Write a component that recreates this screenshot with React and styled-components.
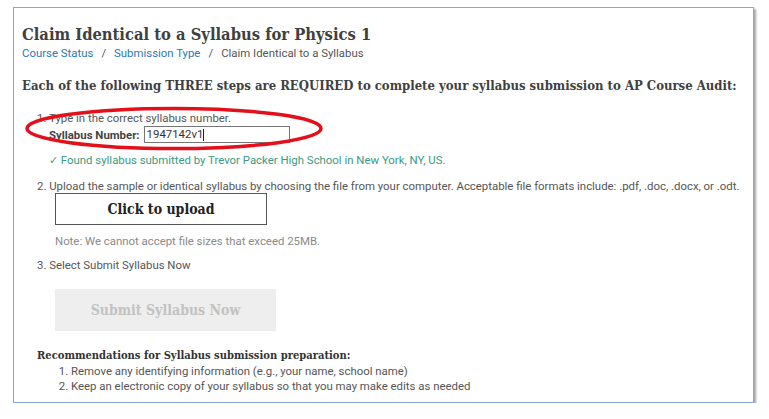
import React from 'react'
import styled, { createGlobalStyle } from 'styled-components'

const Global = createGlobalStyle`
  body {
    margin: 0;
    background: #fff;
    font-family: Roboto, "Liberation Sans", Arial, sans-serif;
  }
`

const Panel = styled.div`
  position: relative;
  margin: 7px 0 0 13px;
  width: 741px;
  height: 396px;
  box-sizing: border-box;
  border: 1.5px solid #86a7d6;
  box-shadow: 2px 2px 2px rgba(0, 0, 0, 0.35);
  padding: 17px 0 0 8px;
  color: #555;
  font-size: 11.4px;
`

const Title = styled.h1`
  margin: 0;
  font-family: "DejaVu Serif Condensed", "DejaVu Serif", serif;
  font-weight: bold;
  font-size: 16.4px;
  line-height: 20px;
  color: #404040;
`

const Crumbs = styled.div`
  display: flex;
  gap: 8px;
  margin-top: 1px;
  line-height: 14px;
  color: #555;
`

const Crumb = styled.a`
  color: ${p => (p.current ? '#555' : '#2b78b6')};
  text-decoration: none;
`

const Heading = styled.h2`
  margin: 17px 0 0;
  font-family: "DejaVu Serif Condensed", "DejaVu Serif", serif;
  font-weight: bold;
  font-size: 13px;
  line-height: 18px;
  color: #404040;
  white-space: nowrap;
`

const Step = styled.div`
  position: relative;
  padding-left: 15px;
  margin-top: ${p => p.gap || 0}px;
`

const Line = styled.div`
  line-height: 14px;
  padding-left: ${p => p.indent || 0}px;
  margin-top: ${p => p.gap || 0}px;
  color: ${p => p.color || '#555'};
`

const Field = styled.div`
  display: flex;
  align-items: center;
  gap: 4px;
  padding-left: 12px;
  margin-top: 1px;
`

const Label = styled.span`
  font-weight: bold;
  color: #444;
`

const Input = styled.div`
  width: 146px;
  height: 17px;
  box-sizing: border-box;
  border: 1px solid #777;
  padding: 0 2px;
  line-height: 15px;
  color: #333;
  display: flex;
  align-items: center;

  &::after {
    content: '';
    width: 1px;
    height: 12px;
    background: #222;
  }
`

const Button = styled.div`
  width: ${p => p.w}px;
  height: ${p => p.h}px;
  box-sizing: border-box;
  margin: ${p => p.m || '0'};
  margin-left: 18px;
  display: flex;
  align-items: center;
  justify-content: center;
  font-family: "DejaVu Serif Condensed", "DejaVu Serif", serif;
  font-weight: bold;
  font-size: 14px;
  border: ${p => (p.disabled ? 'none' : '1px solid #555')};
  background: ${p => (p.disabled ? '#eeeeee' : '#fff')};
  color: ${p => (p.disabled ? '#c2c2c2' : '#222')};
`

const Recs = styled.div`
  margin: 17px 0 0 15px;
`

const RecTitle = styled.div`
  font-family: "DejaVu Serif Condensed", "DejaVu Serif", serif;
  font-weight: bold;
  font-size: 11.1px;
  line-height: 15px;
  color: #333;
`

const List = styled.ol`
  margin: 1px 0 0;
  padding-left: 34px;
  line-height: 15px;
  color: #555;
`

const Ellipse = styled.svg`
  position: absolute;
  left: 2px;
  top: 1px;
  overflow: visible;
  pointer-events: none;
`

export default function App() {
  return (
    <>
      <Global />
      <Panel>
        <Title>Claim Identical to a Syllabus for Physics 1</Title>
        <Crumbs>
          <Crumb href="#">Course Status</Crumb>
          <span>/</span>
          <Crumb href="#">Submission Type</Crumb>
          <span>/</span>
          <Crumb current>Claim Identical to a Syllabus</Crumb>
        </Crumbs>
        <Heading>
          Each of the following THREE steps are REQUIRED to complete your syllabus submission to AP Course Audit:
        </Heading>

        <Step gap={16}>
          <Line>1. Type in the correct syllabus number.</Line>
          <Field>
            <Label>Syllabus Number:</Label>
            <Input>1947142v1</Input>
          </Field>
          <Line indent={12} gap={10} color="#3a9a82">
            ✓ Found syllabus submitted by Trevor Packer High School in New York, NY, US.
          </Line>
          <Ellipse width="300" height="40">
            <ellipse cx="150" cy="16.5" rx="147" ry="20" fill="none" stroke="#e3101c" strokeWidth="3.5" />
          </Ellipse>
        </Step>

        <Step gap={12}>
          <Line>
            2. Upload the sample or identical syllabus by choosing the file from your computer. Acceptable file formats include: .pdf, .doc, .docx, or .odt.
          </Line>
          <Button w={212} h={32}>Click to upload</Button>
          <Line indent={18} gap={9} color="#8a8a8a">
            Note: We cannot accept file sizes that exceed 25MB.
          </Line>
        </Step>

        <Step gap={10}>
          <Line>3. Select Submit Syllabus Now</Line>
          <Button w={221} h={42} m="17px 0 0" disabled>Submit Syllabus Now</Button>
        </Step>

        <Recs>
          <RecTitle>Recommendations for Syllabus submission preparation:</RecTitle>
          <List>
            <li>Remove any identifying information (e.g., your name, school name)</li>
            <li>Keep an electronic copy of your syllabus so that you may make edits as needed</li>
          </List>
        </Recs>
      </Panel>
    </>
  )
}
